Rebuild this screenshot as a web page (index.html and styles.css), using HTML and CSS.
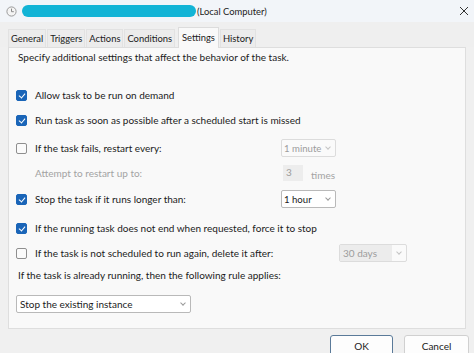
FILE: index.html
```html
<!DOCTYPE html>
<html>
<head>
<meta charset="utf-8">
<link rel="stylesheet" href="styles.css">
</head>
<body>
<div class="window">
  <div class="titlebar">
    <svg class="appicon" width="11" height="11" viewBox="0 0 11 11"><circle cx="5.5" cy="5.5" r="4.6" fill="#f4f4f4" stroke="#9a9a9a" stroke-width="1"/><path d="M5.5 2.6V5.7H7.8" fill="none" stroke="#8a8a8a" stroke-width="1"/></svg>
    <div class="redact"></div>
    <span class="title">(Local Computer)</span>
    <svg class="close" width="10" height="10" viewBox="0 0 10 10"><path d="M1 1L9 9M9 1L1 9" stroke="#333" stroke-width="1"/></svg>
  </div>
  <div class="tabs">
    <div class="tab">General</div>
    <div class="tab">Triggers</div>
    <div class="tab">Actions</div>
    <div class="tab">Conditions</div>
    <div class="tab active">Settings</div>
    <div class="tab">History</div>
  </div>
  <div class="panel">
    <div class="desc">Specify additional settings that affect the behavior of the task.</div>

    <div class="row r1"><span class="cb on"></span><span class="lbl">Allow task to be run on demand</span></div>
    <div class="row r2"><span class="cb on"></span><span class="lbl">Run task as soon as possible after a scheduled start is missed</span></div>
    <div class="row r3"><div class="left"><span class="cb"></span><span class="lbl">If the task fails, restart every:</span></div><div class="select dis w54">1 minute<span class="chev"></span></div></div>
    <div class="row r4"><div class="left"><span class="lbl dim">Attempt to restart up to:</span></div><div class="num">3</div><span class="times">times</span></div>
    <div class="row r5"><div class="left"><span class="cb on"></span><span class="lbl">Stop the task if it runs longer than:</span></div><div class="select w54">1 hour<span class="chev"></span></div></div>
    <div class="row r6"><span class="cb on"></span><span class="lbl">If the running task does not end when requested, force it to stop</span></div>
    <div class="row r7"><div class="left wide"><span class="cb"></span><span class="lbl">If the task is not scheduled to run again, delete it after:</span></div><div class="select dis w67"><span class="fill">30 days</span><span class="chev"></span></div></div>
    <div class="row r8"><span class="lbl plain">If the task is already running, then the following rule applies:</span></div>
    <div class="row r9"><div class="select big">Stop the existing instance<span class="chev"></span></div></div>
  </div>
  <div class="footer">
    <div class="btn ok">OK</div>
    <div class="btn">Cancel</div>
  </div>
</div>
</body>
</html>
```
FILE: styles.css
```css
* { box-sizing: border-box; }
html, body { margin: 0; padding: 0; }
body {
  width: 474px; height: 353px; overflow: hidden;
  font-family: Lato, "Noto Sans", sans-serif;
  font-size: 10px;
  color: #1b1b1b;
  background: #f0f0f0;
}
.window { width: 474px; height: 353px; display: flex; flex-direction: column; }
.titlebar {
  height: 22px; flex: none;
  display: flex; align-items: center;
  background: #f2f5f9;
  padding-left: 6px;
  position: relative;
}
.appicon { flex: none; }
.redact {
  width: 174px; height: 12px; margin-left: 5px;
  background: #12b4d6; border-radius: 6px;
}
.title { margin-left: 1px; font-size: 9.4px; color: #222; }
.close { position: absolute; right: 5px; top: 6px; }
.tabs {
  height: 25px; flex: none;
  display: flex; align-items: flex-end;
  padding-left: 8px;
  background: #efefef;
}
.tab {
  height: 18px; line-height: 17px;
  padding: 0 2px;
  margin-right: 1px;
  background: #ececec;
  border: 1px solid #e2e2e2; border-bottom: none;
  color: #1b1b1b;
  font-size: 9.4px;
}
.tab.active {
  height: 21px; line-height: 19px;
  background: #f9f9f9;
  border-color: #dcdcdc;
  margin: 0 1px 0 2px;
  position: relative; top: 1px;
  padding: 0 3px;
}
.panel {
  margin: 0 8px;
  height: 282px; flex: none;
  background: #f9f9f9;
  border: 1px solid #dedede;
  padding: 0 7px;
}
.desc { height: 18px; line-height: 18px; padding-left: 2px; }
.row { display: flex; align-items: center; height: 18px; }
.r1 { margin-top: 20px; }
.r2 { margin-top: 7px; }
.r3 { margin-top: 10px; }
.r4 { margin-top: 7px; }
.r5 { margin-top: 8px; }
.r6 { margin-top: 11px; }
.r7 { margin-top: 7px; }
.r8 { margin-top: 4px; }
.r9 { margin-top: 11px; }
.left { width: 265px; display: flex; align-items: center; flex: none; height: 18px; }
.left.wide { width: 323px; }
.cb {
  width: 11px; height: 11px; flex: none;
  border: 1px solid #8f8f8f; border-radius: 2px;
  background: #fbfbfb;
  position: relative;
}
.cb.on { background: #1a65b8; border-color: #1a65b8; }
.cb.on::after {
  content: ""; position: absolute;
  left: 3px; top: 1px; width: 3px; height: 5px;
  border: solid #fff; border-width: 0 1.3px 1.3px 0;
  transform: rotate(40deg);
}
.lbl { margin-left: 8px; white-space: nowrap; }
.lbl.dim { margin-left: 19px; color: #a3a3a3; }
.lbl.plain { margin-left: 2px; }
.select {
  height: 18px; display: flex; align-items: center;
  padding-left: 2px;
  border: 1px solid #b9b9b9; border-radius: 2px;
  background: #fff; position: relative;
  color: #1b1b1b;
}
.select.dis { border-color: #dcdcdc; color: #9c9c9c; background: #fafafa; }
.w54 { width: 55px; font-size: 9.6px; }
.w67 { width: 68px; padding-left: 0; }
.fill {
  width: 52px; height: 100%; display: flex; align-items: center;
  padding-left: 3px; background: #ececec;
}
.select.big { width: 175px; padding-left: 3px; }
.chev {
  position: absolute; right: 5px; top: 5px;
  width: 4px; height: 4px;
  border: solid #9a9a9a; border-width: 0 1px 1px 0;
  transform: rotate(45deg);
}
.select.dis .chev { border-color: #c4c4c4; }
.num {
  width: 20px; height: 16px; margin-left: 2px;
  background: #ededed; color: #9c9c9c;
  padding-left: 3px; line-height: 14px;
}
.times { margin-left: 8px; color: #a3a3a3; position: relative; top: 2px; }
.footer {
  flex: 1; display: flex; justify-content: flex-end; align-items: flex-start;
  padding: 6px 5px 0 0; gap: 11px;
  background: #f0f0f0;
}
.btn {
  width: 65px; height: 22px; line-height: 20px; text-align: center;
  background: #fdfdfd; border: 1px solid #d0d0d0; border-radius: 3px;
  font-size: 10px;
}
.btn.ok { width: 63px; border-color: #5a7a99; }
```
